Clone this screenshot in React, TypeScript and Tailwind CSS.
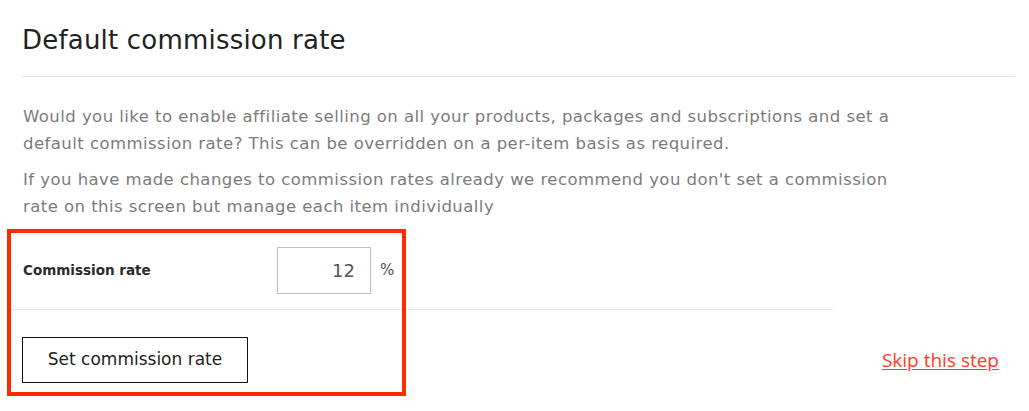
export default function App() {
  return (
    <div className="relative h-[411px] w-[1029px] overflow-hidden bg-white font-['DejaVu_Sans',sans-serif]">
      <div className="ml-[22px] mr-[14px] border-b border-[#e6e6e6] pt-[22px] pb-[18px]">
        <h2 className="text-[26px] leading-[36px] font-normal tracking-[0.2px] text-[#222]">Default commission rate</h2>
      </div>

      <div className="ml-[23px] mt-[26px] w-[960px] text-[16.5px] leading-[27px] tracking-[0.45px] text-[#7b7b7b]">
        <p>
          Would you like to enable affiliate selling on all your products, packages and subscriptions and set a
          <br />
          default commission rate? This can be overridden on a per-item basis as required.
        </p>
        <p className="mt-[9px]">
          If you have made changes to commission rates already we recommend you don't set a commission
          <br />
          rate on this screen but manage each item individually
        </p>
      </div>

      <div className="ml-[10px] mt-[11px] flex h-[79px] w-[823px] items-center border-b border-[#e8e8e8] pl-[13px]">
        <label className="w-[254px] text-[13.5px] font-semibold text-[#2a2a2a]">Commission rate</label>
        <div className="flex h-[47px] w-[94px] items-center justify-end border border-[#bdbdbd] pr-[15px] text-[18px] text-[#555]">
          12
        </div>
        <span className="ml-[9px] text-[15px] text-[#4a5568]">%</span>
      </div>

      <div className="mt-[27px] flex items-center justify-between pl-[22px] pr-[30px]">
        <button className="h-[46px] w-[226px] border border-[#111] bg-white text-[17px] text-[#222]">
          Set commission rate
        </button>
        <a href="#" className="font-['Open_Sans',sans-serif] text-[19px] text-[#ff3b1f] underline underline-offset-2">
          Skip this step
        </a>
      </div>

      <div className="pointer-events-none absolute left-[7px] top-[229px] h-[167px] w-[399px] border-[4.5px] border-[#ff2a00]" />
    </div>
  )
}
